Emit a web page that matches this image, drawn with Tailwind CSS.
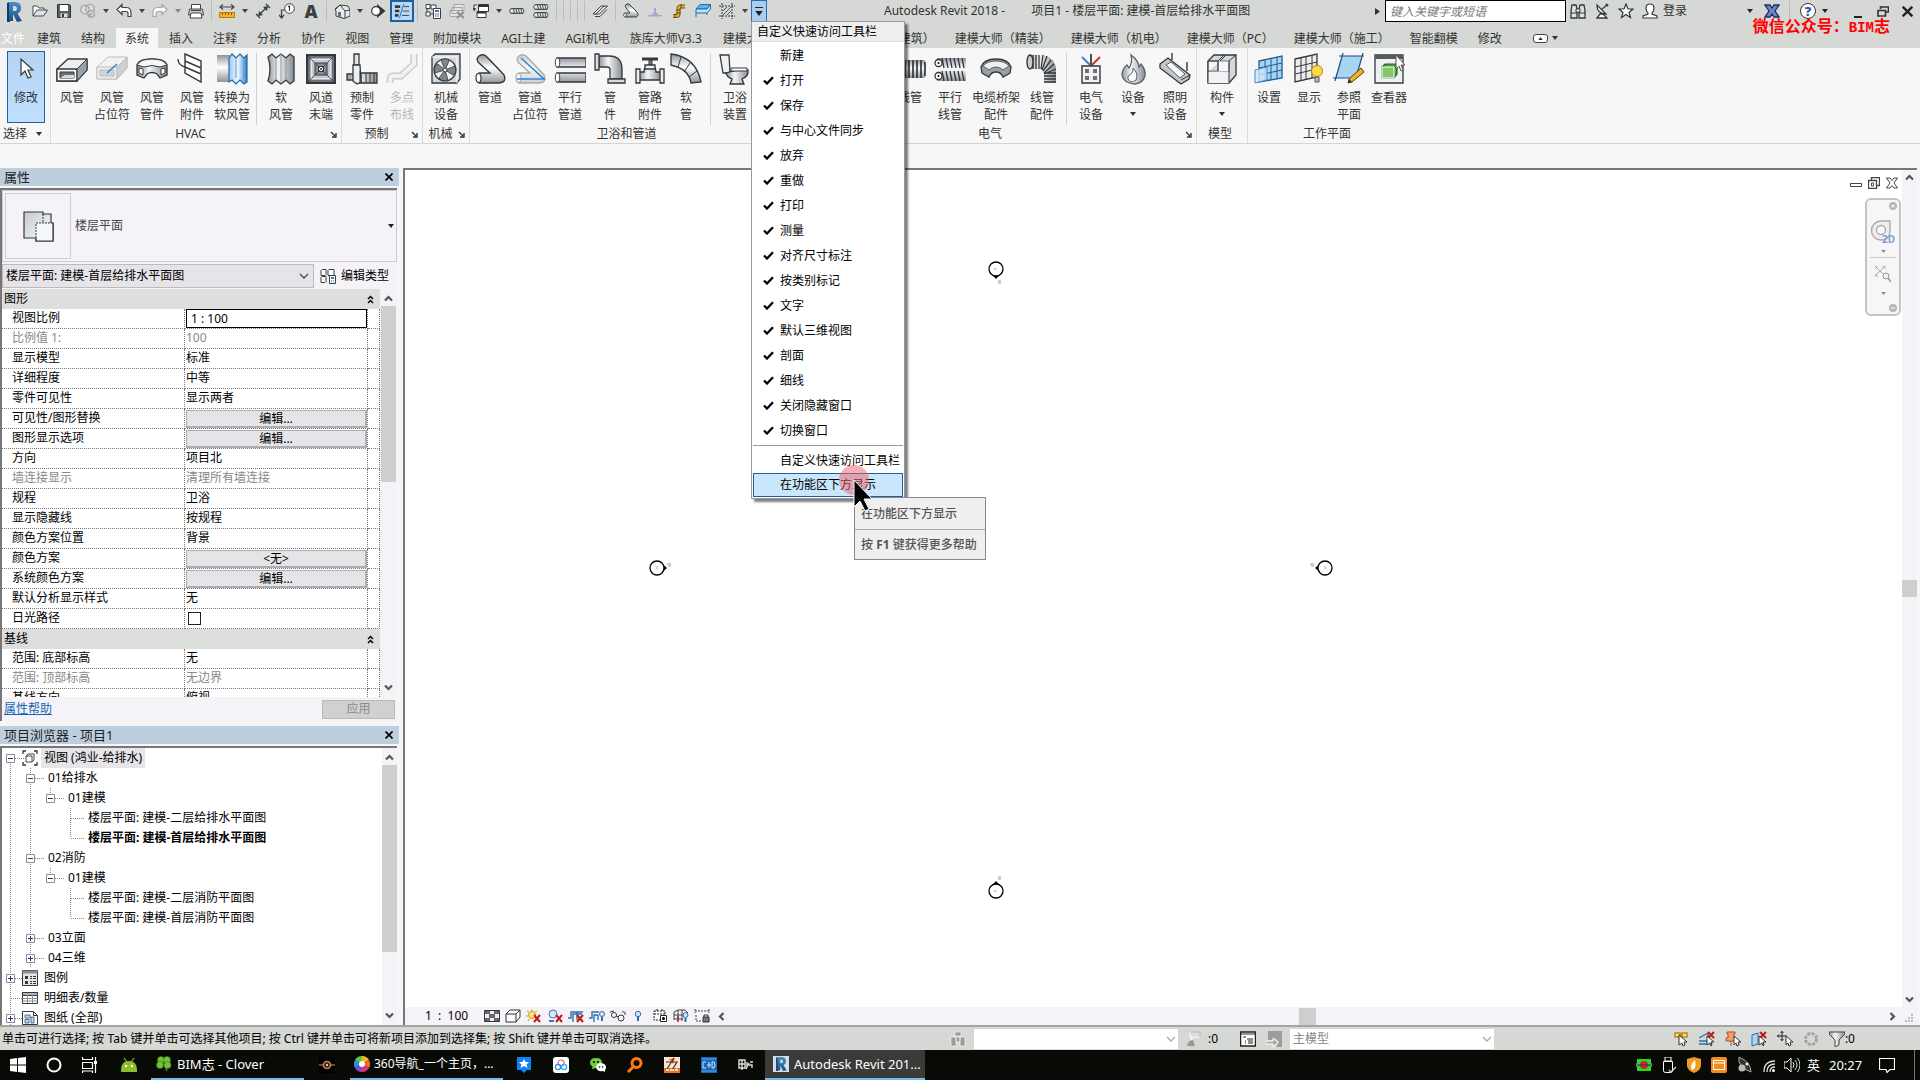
<!DOCTYPE html>
<html lang="zh-CN">
<head>
<meta charset="utf-8">
<meta name="viewport" content="width=device-width, initial-scale=1">
<title>Autodesk Revit 2018 - 项目1</title>
<script src="https://cdn.jsdelivr.net/npm/@tailwindcss/browser@4"></script>
</head>
<body class="relative flex h-screen flex-col overflow-hidden bg-[#f6f6f7] font-['Noto_Sans','Noto_Sans_CJK_SC',sans-serif] text-xs leading-4 text-[#222]">

<!-- Shared icon definitions -->
<svg class="absolute h-0 w-0" aria-hidden="true">
  <defs>
    <linearGradient id="g" x1="0" y1="0" x2="0" y2="1"><stop offset="0" stop-color="#8f959c"/><stop offset=".45" stop-color="#fff"/><stop offset="1" stop-color="#8f959c"/></linearGradient>
    <linearGradient id="gh" x1="0" y1="0" x2="1" y2="0"><stop offset="0" stop-color="#8f959c"/><stop offset=".4" stop-color="#f4f5f6"/><stop offset="1" stop-color="#858b92"/></linearGradient>
    <linearGradient id="gb" x1="0" y1="0" x2="1" y2="0"><stop offset="0" stop-color="#9cc8ee"/><stop offset=".5" stop-color="#eef7ff"/><stop offset="1" stop-color="#2d7cc4"/></linearGradient>
    <linearGradient id="gp" x1="0" y1="0" x2="1" y2="1"><stop offset="0" stop-color="#c4c9d0"/><stop offset="1" stop-color="#fff"/></linearGradient>
    <linearGradient id="gr" x1="0" y1="0" x2="0" y2="1"><stop offset="0" stop-color="#4b90c8"/><stop offset="1" stop-color="#1b4e80"/></linearGradient>
  </defs>

  <!-- generic -->
  <symbol id="tri" viewBox="0 0 6 4"><path d="M0 0h6L3 4z" fill="currentColor"/></symbol>
  <symbol id="launch" viewBox="0 0 7 7"><path d="M1 1l4 4M6 2v4H2" fill="none" stroke="#333" stroke-width="1.4"/></symbol>
  <symbol id="chev" viewBox="0 0 10 6"><path d="M1 1l4 4 4-4" fill="none" stroke="currentColor" stroke-width="1.3"/></symbol>
  <symbol id="arr" viewBox="0 0 9 7"><path d="M1 1.5l3.500 3.500L8 1.500" fill="none" stroke="#555" stroke-width="2.200"/></symbol>
  <symbol id="x" viewBox="0 0 8 8"><path d="M.5.5l7 7M7.500.5l-7 7" stroke="currentColor" stroke-width="1.700"/></symbol>
  <symbol id="ck" viewBox="0 0 11 9"><path d="M1 4.500l3 3L10 1.200" fill="none" stroke="#000" stroke-width="2.300"/></symbol>
  <symbol id="dbl" viewBox="0 0 7 9"><path d="M1 4l2.500-2.500L6 4M1 8l2.500-2.500L6 8" fill="none" stroke="#000" stroke-width="1.500"/></symbol>
  <symbol id="R" viewBox="0 0 16 20"><path d="M1 1l3-1v20H1z" fill="#123a63"/><path d="M3 0h6q6 0 6 6 0 4-3.500 5.500L16 19l-5 1-4-8v7H3z" fill="url(#gr)"/><path d="M7 4v5q4 .5 4-2.500T7 4z" fill="#cfdce8"/></symbol>

  <!-- quick access toolbar -->
  <symbol id="q-open" viewBox="0 0 16 16"><path d="M1 13V3h4l2 2h5v3" fill="#fff" stroke="#444a50"/><path d="M1 13l4-6h10.500l-4 6z" fill="#dfe3e7" stroke="#444a50"/></symbol>
  <symbol id="q-save" viewBox="0 0 16 16"><path d="M1.500 1.500h12l1 1v12h-13z" fill="#5a6066" stroke="#30353a"/><path d="M4 2h8v6H4z" fill="#fff"/><path d="M4.500 10.500h7v4h-7z" fill="#d9dcdf"/><path d="M6 11h2v3H6z" fill="#333"/></symbol>
  <symbol id="q-sync" viewBox="0 0 16 16"><path d="M1 4l4-2 4 2v5l-4 2-4-2zM6 3l4-2 4 2v5l-4 3-4-3z" fill="#ddd" stroke="#999"/><circle cx="11" cy="11" r="4" fill="#aaa"/><path d="M9 11a2 2 0 1 1 2 2" fill="none" stroke="#eee"/></symbol>
  <symbol id="q-undo" viewBox="0 0 16 16"><path d="M1 6.500l5-5v3h4q5 0 5 5v4h-3v-3q0-2-2-2H6v3z" fill="#fff" stroke="currentColor" stroke-width="1.200"/></symbol>
  <symbol id="q-print" viewBox="0 0 16 16"><path d="M3.500 6V1.500h9V6" fill="#fff" stroke="#444"/><path d="M1.500 6h13l1 6H.5z" fill="#c8ccd0" stroke="#444"/><path d="M3 10h10l1 5H2z" fill="#fff" stroke="#444"/><path d="M3 7.500h10" stroke="#444"/></symbol>
  <symbol id="q-meas" viewBox="0 0 16 16"><path d="M1 4h14M4 1.500L1 4l3 2.500M12 1.500L15 4l-3 2.500" fill="none" stroke="#444" stroke-width="1.200"/><path d="M.5 9.500h15v5H.5z" fill="#f5b428" stroke="#b87a10"/><path d="M3.500 10v2M6.500 10v2M9.500 10v2M12.500 10v2" stroke="#8a5a00"/></symbol>
  <symbol id="q-dim" viewBox="0 0 16 16"><path d="M4 12l8-8M1 11l4 4M11 1l4 4" stroke="#3a3f45" stroke-width="1.300"/><path d="M3 13l1-5 4 4zM13 3L8 4l4 4z" fill="#3a3f45"/></symbol>
  <symbol id="q-tag" viewBox="0 0 16 16"><circle cx="10.500" cy="5.500" r="4.800" fill="#fff" stroke="#3a3f45"/><path d="M9 4l1.500-1v5M6 7H2.500v7M0 12l2.500 3L5 12" fill="none" stroke="#3a3f45" stroke-width="1.200"/></symbol>
  <symbol id="q-house" viewBox="0 0 16 16"><path d="M1 6l5-4 8 1 2 4v6l-6 2.500L2 13V8z" fill="#e8ebee" stroke="#3a3f45"/><path d="M1 7l5-5 5 6v7M11 8l5-1" fill="none" stroke="#3a3f45"/><path d="M4 9h3v5l-3-.8z" fill="#6a7078"/></symbol>
  <symbol id="q-sec" viewBox="0 0 16 16"><path d="M7 1l8.500 7L7 15z" fill="#333"/><circle cx="6" cy="8" r="4.300" fill="#fff" stroke="#333" stroke-width="1.200"/></symbol>
  <symbol id="q-thin" viewBox="0 0 18 16"><path d="M1 3h6M1 8h5M1 13h4" stroke="#33383d" stroke-width="3"/><path d="M11 3h6M10 8h7M9 13h8" stroke="#33383d"/><path d="M11 0L6 16" stroke="#2f7fd0" stroke-width="1.200"/></symbol>
  <symbol id="q-prop" viewBox="0 0 16 16"><path d="M1 1.500h4v4H1zM1 9h4v4H1zM6 2h5v4H6zM2 6v3M5 11h3" fill="#fff" stroke="#3a3f45"/><path d="M8.500 5.500h7v10h-7z" fill="#fff" stroke="#3a3f45"/><path d="M10 7h4v2h-4z" fill="#2f7fd0"/><path d="M10 11h1.500m1 0H14M10 13h1.500m1 0H14" stroke="#444"/></symbol>
  <symbol id="q-type" viewBox="0 0 16 16"><path d="M1 2.500l1-1h4v5l-1 1H1zM8 2.500l1-1h5v5l-1 1H8zM1 9.500l1-1h4v5l-1 1H1z" fill="#fff" stroke="#3a3f45"/><path d="M9.500 7.500h6v8h-6z" fill="#fff" stroke="#3a3f45"/><path d="M11 9h3v2h-3z" fill="#2f7fd0"/><path d="M11 13h1m1 0h1" stroke="#444"/></symbol>
  <symbol id="q-close" viewBox="0 0 16 16"><path d="M5 1.500h10v6H5zM3 4.500h10v6H3zM1 7.500h9v6H1z" fill="#e4e5e4" stroke="#a2a5a2"/><path d="M8 9l7 6M15 9l-7 6" stroke="#8f9290" stroke-width="2"/></symbol>
  <symbol id="q-switch" viewBox="0 0 16 16"><path d="M5.500 1.500h10v7h-10zM1 8V2h3" fill="#fff" stroke="#333"/><path d="M6 2h9v2H6z" fill="#333"/><path d="M4 8.500h9v6H4z" fill="#fff" stroke="#333"/><path d="M4 9h9v1.500H4zM0 5h3L1.500 8z" fill="#333"/></symbol>
  <symbol id="q-cond" viewBox="0 0 16 6"><path d="M2 .5h12q2 2.500 0 5H2Q-1 3 2 .5z" fill="url(#g)" stroke="#4a4f55"/><path d="M4.500 1l1 4.500M7 1l1 4.500M9.500 1l1 4.500M12 1l1 4.500" stroke="#4a4f55"/></symbol>
  <symbol id="q-tray" viewBox="0 0 16 16"><path d="M1 11L9 3h6.500l-8 8zM3 13.500h5l7-7" fill="#dfe2e6" stroke="#444"/><path d="M4 11l8-8" stroke="#444"/></symbol>
  <symbol id="q-pipe" viewBox="0 0 16 16"><path d="M3 1.500Q6 0 7 2l7.500 7.500Q16 13 13 14H2q-2-2 0-4h5L2.500 4Q2 2 3 1.500z" fill="url(#g)" stroke="#3a3f45"/><ellipse cx="2" cy="12" rx="1.300" ry="2" fill="#fff" stroke="#3a3f45" stroke-width=".8"/></symbol>
  <symbol id="q-pur" viewBox="0 0 16 16"><path d="M1 12h14v1.500H1zM5 10h6v2H5zM7 3h2v7H7z" fill="#a9a7d0"/><path d="M6 3h4v2H6z" fill="#d4d2e6"/></symbol>
  <symbol id="q-gold" viewBox="0 0 16 16"><path d="M14 3.500H9.500q-2 0-2 2.500v5q0 2-2 2H2" fill="none" stroke="#7a5a10" stroke-width="4"/><path d="M14 3.500H9.500q-2 0-2 2.500v5q0 2-2 2H2" fill="none" stroke="#e2b33c" stroke-width="2"/><path d="M10 1v5M5 7h5M5 10h5M4 11v4" stroke="#6a4d0c"/></symbol>
  <symbol id="q-blue" viewBox="0 0 16 16"><path d="M1 6l4-4.500h10.500L12 6z" fill="#5fb4ec" stroke="#1d6ea8"/><path d="M1 6h11l3.500-4.500V6L12 10H1z" fill="#bfe2f8" stroke="#1d6ea8"/><path d="M1 10v4M12 10v2" stroke="#1d6ea8"/></symbol>
  <symbol id="q-crop" viewBox="0 0 16 16"><path d="M3 0v16M13 0v16M0 3h16M0 13h16" stroke="#33383d" stroke-dasharray="2 1"/><path d="M4 8l4-4M4 12l8-8M8 12l4-4" stroke="#555"/></symbol>
  <symbol id="bino" viewBox="0 0 16 16"><path d="M2 2h4l1 4v9H1V8zM10 2h4l1 6v7H9V6z" fill="#dfe2e4" stroke="#33383d" stroke-width="1.300"/><path d="M6 6h4v3H6zM1 10h6M9 10h6" fill="#fff" stroke="#33383d"/></symbol>
  <symbol id="sat" viewBox="0 0 16 16"><path d="M3 2q0 9 9 9zM8 6l5-4M3 15h10l-4-4H6z" fill="#fff" stroke="#33383d" stroke-width="1.300"/><path d="M12 1l2 2" stroke="#33383d" stroke-width="2"/></symbol>
  <symbol id="star" viewBox="0 0 16 16"><path d="M8 1l2 5h5l-4 3.500 1.500 5L8 11.500l-4.500 3 1.500-5L1 6h5z" fill="#fff" stroke="#33383d" stroke-width="1.200"/></symbol>
  <symbol id="user" viewBox="0 0 16 16"><path d="M8 1q4 0 4 4 0 3-2 5v1l5 2v2H1v-2l5-2v-1Q4 8 4 5q0-4 4-4z" fill="#fff" stroke="#33383d" stroke-width="1.200"/></symbol>
  <symbol id="exch" viewBox="0 0 16 14"><path d="M1 1h5l2 3 2-3h5l-4 6 4 6h-5l-2-3-2 3H1l4-6z" fill="#6f86c4" stroke="#1c2d66" stroke-width="1.300"/></symbol>
  <symbol id="wres" viewBox="0 0 12 11"><path d="M3.500 3V1h8v5H9M1 4.500h7.500v5.500H1z" fill="none" stroke="#333" stroke-width="1.600"/></symbol>

  <!-- ribbon -->
  <symbol id="r-cur" viewBox="0 0 32 32"><path d="M11 6v16l4-4 3 7 3-1-3-7h5z" fill="#fff" stroke="#33383d" stroke-width="1.200"/></symbol>
  <symbol id="r-duct" viewBox="0 0 32 32"><path d="M1 16L12 6h19v11L21 28H1z" fill="#eceef0" stroke="#33383d" stroke-width="1.300"/><path d="M1 16h20v12H1z" fill="#f8f8f8" stroke="#33383d" stroke-width="1.300"/><path d="M21 16L31 6v11L21 28z" fill="#9aa0a8" stroke="#33383d"/><path d="M4 19h14v6H4z" fill="#6b7178" stroke="#33383d"/><path d="M4 25l5-3h9v3z" fill="#d5d8dc"/></symbol>
  <symbol id="r-ductp" viewBox="0 0 32 32"><g opacity=".45"><path d="M1 14L12 4h19v11L21 26H1z" fill="#eceef0" stroke="#777"/><path d="M1 14h20v12H1z" fill="#e4e4e4" stroke="#777"/><path d="M21 14L31 4v11L21 26z" fill="#9aa0a8" stroke="#777"/><path d="M4 17h14v6H4z" fill="#aaa" stroke="#777"/></g><path d="M11 20L21 11" stroke="#2f86d8" stroke-width="1.600"/></symbol>
  <symbol id="r-elbow" viewBox="0 0 32 32"><path d="M1 12Q3 6 16 6t15 6v10l-7 3-3-4q-5-3-10 0l-3 4-7-3z" fill="url(#gh)" stroke="#33383d" stroke-width="1.300"/><path d="M1 12l7 2q8-3 16 0l7-2Q28 6 16 6T1 12z" fill="#f7f7f8" stroke="#33383d"/><path d="M3 15l4 1v6l-4-2zM29 15l-4 1v6l4-2z" fill="#fff" stroke="#33383d"/></symbol>
  <symbol id="r-vane" viewBox="0 0 32 32"><path d="M9 1l16 7v21L9 20zM9 8l16 7M9 14l16 7M2 6q0 6 7 8" fill="#fff" stroke="#33383d" stroke-width="1.400"/></symbol>
  <symbol id="r-conv" viewBox="0 0 32 32"><path d="M1 2h13v27H1z" fill="url(#g)"/><path d="M13 5l3-4 4 4 4-4 4 4 3-3v27l-3 2-4-4-4 4-4-4-3 2z" fill="url(#gb)" stroke="#2169a8" stroke-width="1.200"/><path d="M20 5v20M28 5v20" stroke="#5d9fd6"/></symbol>
  <symbol id="r-flex" viewBox="0 0 32 32"><path d="M3 4l4-3 4 4 5-4 5 4 4-4 4 3v24l-4 3-4-4-5 4-5-4-4 4-4-3q4-12 0-24z" fill="url(#gh)" stroke="#33383d" stroke-width="1.300"/><path d="M11 5v22M21 5v22M16 1v29" stroke="#9299a1"/></symbol>
  <symbol id="r-diff" viewBox="0 0 32 32"><path d="M2 2h28v28H2z" fill="#6b7178" stroke="#33383d" stroke-width="2"/><path d="M6 6h20v20H6z" fill="#c6cacf" stroke="#fff"/><path d="M10 10h12v12H10z" fill="#878d94" stroke="#33383d"/><path d="M13.500 13.500h5v5h-5z" fill="#fff" stroke="#33383d"/><path d="M2 2l28 28M30 2L2 30" stroke="#33383d" stroke-width=".8"/></symbol>
  <symbol id="r-fab" viewBox="0 0 32 32"><path d="M8 1h5v11H8zM1 21h7v6H1zM15 20h16v10H15z" fill="url(#gh)" stroke="#33383d" stroke-width="1.300"/><path d="M7 12h7l1 17-4 2-4-3z" fill="#eee" stroke="#33383d" stroke-width="1.300"/><path d="M20 20v10M24 20v10M28 20v10M14 18v13" stroke="#33383d"/></symbol>
  <symbol id="r-multi" viewBox="0 0 32 32"><g opacity=".55"><path d="M28 1v10L15 23H6q-2 0-2 7" fill="none" stroke="#aaa" stroke-width="7"/><path d="M28 1v10L15 23H6q-2 0-2 7" fill="none" stroke="#eee" stroke-width="4"/></g></symbol>
  <symbol id="r-fan" viewBox="0 0 32 32"><path d="M2 4l3-3h25v25l-3 4H2z" fill="#d5d8dc" stroke="#33383d" stroke-width="1.300"/><path d="M2 4h25v26" fill="none" stroke="#fff"/><circle cx="15" cy="17" r="11" fill="#f4f4f4" stroke="#33383d" stroke-width="1.200"/><path d="M15 17L11 7q6-3 8 1zM15 17l10-4q2 7-2 9zM15 17l3 10q-6 2-9-2zM15 17L5 20q-2-7 3-9z" fill="#7f868d" stroke="#33383d" stroke-width=".8"/><circle cx="15" cy="17" r="2" fill="#fff" stroke="#33383d"/></symbol>
  <symbol id="r-pipe" viewBox="0 0 32 32"><path d="M5 3q5-3 8 1l17 18q2 5-1 7l-4 1H5q-4-5 0-10h11L4 9q-2-4 1-6z" fill="url(#g)" stroke="#33383d" stroke-width="1.400"/><ellipse cx="4.500" cy="25" rx="2.500" ry="4.500" fill="#fff" stroke="#33383d" stroke-width="1.200"/></symbol>
  <symbol id="r-pipep" viewBox="0 0 32 32"><g opacity=".4"><use href="#r-pipe"/></g><path d="M7 5l23 21H3" fill="none" stroke="#2f86d8" stroke-width="1.600"/></symbol>
  <symbol id="r-par" viewBox="0 0 32 32"><path d="M3 5h29v9H3zM3 20h29v9H3z" fill="url(#g)" stroke="#33383d" stroke-width="1.300"/><ellipse cx="3.500" cy="9.500" rx="2.200" ry="4.500" fill="#fff" stroke="#33383d"/><ellipse cx="3.500" cy="24.500" rx="2.200" ry="4.500" fill="#fff" stroke="#33383d"/></symbol>
  <symbol id="r-fit" viewBox="0 0 32 32"><path d="M5 3h10q13 0 13 13v10H16V17q0-3-3-3H5z" fill="url(#gh)" stroke="#33383d" stroke-width="1.300"/><path d="M1 1h4v16H1zM14 26h17v4H14z" fill="#d9dcdf" stroke="#33383d" stroke-width="1.300"/></symbol>
  <symbol id="r-valve" viewBox="0 0 32 32"><path d="M8 6h16" stroke="#33383d" stroke-width="3"/><path d="M15 7h3v6h-3z" fill="#777" stroke="#33383d"/><path d="M5 19h5q0-6 6-7 6 1 6 7h5v8H5z" fill="url(#gh)" stroke="#33383d" stroke-width="1.300"/><path d="M2 16h4v14H2zM26 16h4v14h-4zM11 12h10v4H11z" fill="#eee" stroke="#33383d" stroke-width="1.300"/></symbol>
  <symbol id="r-hose" viewBox="0 0 32 32"><path d="M1 1q25 3 30 28l-10 1Q19 16 1 12z" fill="url(#g)" stroke="#33383d" stroke-width="1.300"/><path d="M11 4L8 14M20 10l-6 9M27 18l-8 6" stroke="#33383d"/></symbol>
  <symbol id="r-wc" viewBox="0 0 32 32"><path d="M1 2h9l1 18H4z" fill="#eef0f2" stroke="#33383d" stroke-width="1.300"/><path d="M7 20q12-4 22-3 1 6-6 9l2 5H11l2-5q-5-2-6-6z" fill="url(#gh)" stroke="#33383d" stroke-width="1.300"/><path d="M12 15h16v3H12z" fill="#fff" stroke="#33383d"/></symbol>
  <symbol id="r-cond" viewBox="0 0 32 32"><path d="M1 7h30v18H1z" fill="url(#g)"/><path d="M3 7v18M7 7v18M11 7v18M15 7v18M19 7v18M23 7v18M27 7v18M31 9v14" stroke="#33383d" stroke-width="1.700"/></symbol>
  <symbol id="r-pcond" viewBox="0 0 32 32"><path d="M3 5h29v10H3zM3 18h29v10H3z" fill="url(#g)"/><path d="M8 5l2 10M12 5l2 10M16 5l2 10M20 5l2 10M24 5l2 10M28 5l2 10M8 18l2 10M12 18l2 10M16 18l2 10M20 18l2 10M24 18l2 10M28 18l2 10" stroke="#33383d" stroke-width="1.300"/><circle cx="4.500" cy="10" r="3.500" fill="#fff" stroke="#33383d" stroke-width="1.300"/><circle cx="4.500" cy="23" r="3.500" fill="#fff" stroke="#33383d" stroke-width="1.300"/><circle cx="4.500" cy="10" r="1" /><circle cx="4.500" cy="23" r="1"/></symbol>
  <symbol id="r-tray" viewBox="0 0 32 32"><path d="M1 14Q4 6 16 6t15 8l-1 6-7 4q-2-5-7-5t-7 5l-7-4z" fill="#9aa0a8" stroke="#33383d" stroke-width="1.300"/><path d="M3 13q4-5 13-5t13 5l-6 4q-3-3-7-3t-7 3z" fill="#eceef0" stroke="#5a6066"/></symbol>
  <symbol id="r-cfit" viewBox="0 0 32 32"><path d="M2 2h14q14 2 14 16v12H18V20q0-4-5-4H2z" fill="url(#gh)"/><path d="M7 2v14M10 2v14M13 2v14M17 2l-2 14M21 3l-5 14M25 7l-8 11M28 11l-10 9M30 16l-12 5M30 20H18M30 23H18M30 26H18M30 29H18" stroke="#33383d" stroke-width="1.300"/><ellipse cx="4" cy="9" rx="3" ry="7" fill="#ccc" stroke="#33383d" stroke-width="1.400"/></symbol>
  <symbol id="r-elec" viewBox="0 0 32 32"><path d="M16 1v12" stroke="#222" stroke-width="1.600"/><path d="M7 4l8 8" stroke="#2f7fd0" stroke-width="1.800"/><path d="M25 4l-8 8" stroke="#d02828" stroke-width="1.800"/><path d="M7 13h18v17H7z" fill="#f1f1f1" stroke="#33383d" stroke-width="1.400"/><path d="M10 16h4v4h-4zM18 16h4v4h-4zM10 23h4v4h-4zM18 23h4v4h-4z" fill="#6b7178"/></symbol>
  <symbol id="r-fire" viewBox="0 0 32 32"><path d="M14 2q8 6 8 12l2-3q5 6 4 12-2 7-10 8Q6 30 5 22q0-6 5-10l2 3q4-6 2-13z" fill="url(#gh)" stroke="#5a6066" stroke-width="1.300"/><path d="M16 15q6 6 3 12-5 4-8-1-1-3 2-4 4-3 3-7z" fill="#fafafa" stroke="#5a6066"/></symbol>
  <symbol id="r-light" viewBox="0 0 32 32"><path d="M13 0v7M28 9v9" stroke="#33383d" stroke-width="1.400"/><path d="M1 11l8-6 22 17-1 4-8 5L1 15z" fill="#c3c7cb" stroke="#33383d" stroke-width="1.300"/><path d="M7 12l5-3 14 12-5 4z" fill="#fafafa" stroke="#5a6066"/><path d="M22 27l9-5" stroke="#33383d"/></symbol>
  <symbol id="r-comp" viewBox="0 0 32 32"><path d="M2 8l6-6h22v20l-7 8H2z" fill="#d4d7db" stroke="#33383d" stroke-width="1.300"/><path d="M2 8h10v10H2zM2 19h21V8h-9" fill="#f6f6f7" stroke="#777d84"/><path d="M2 19h21v11H2z" fill="#f2f2f4"/><path d="M12 8l6-6M14 8l6-6M23 8l7-6M23 8v22" stroke="#33383d" fill="none"/><path d="M2 30V8h10v10" fill="none" stroke="#33383d"/></symbol>
  <symbol id="r-set" viewBox="0 0 32 32"><path d="M6 8l23-5v22L6 29z" fill="#a7d4f2" stroke="#1d5f96" stroke-width="1.300"/><path d="M12 7v21M18 5v22M24 4v22M6 15l23-5M6 22l23-5" stroke="#1d5f96"/><path d="M2 17l12-3v13L2 30z" fill="#cfe6f7" fill-opacity=".8" stroke="#4a8abd"/></symbol>
  <symbol id="r-show" viewBox="0 0 32 32"><path d="M2 6l22-5v23L2 29z" fill="#eceef0" stroke="#33383d" stroke-width="1.300"/><path d="M8 5v22M13 4v22M19 2v23M2 14l22-5M2 21l22-5" stroke="#33383d"/><circle cx="24" cy="18" r="5.500" fill="#ffd84c" stroke="#b8860b"/><path d="M22 24h4v5h-4z" fill="#bbb" stroke="#555"/></symbol>
  <symbol id="r-ref" viewBox="0 0 32 32"><path d="M9 3h20l-6 22H2z" fill="#a9d5f3"/><path d="M10 0L2 28M30 0l-7 25M6 3h25M0 25h24" stroke="#1d4f86" stroke-width="1.200"/><path d="M16 26L28 15l3 4-12 10-4 1z" fill="#f0b030" stroke="#5a3a10"/><path d="M16 26l3 3-4 1z" fill="#333"/></symbol>
  <symbol id="r-view" viewBox="0 0 32 32"><path d="M2 2h28v28H2z" fill="#eef0f2" stroke="#33383d" stroke-width="1.300"/><path d="M2 2h28v4H2z" fill="#555b61"/><path d="M9 14l3-3h12v10l-3 4H9z" fill="#4c9a3a" stroke="#256018" stroke-width="1.200"/><path d="M9 14h12v11H9z" fill="#86c56a" stroke="#fff"/><path d="M23 2v14l3-3 2 5 2-1-2-5h4z" fill="#fff" stroke="#555"/></symbol>

  <!-- property and browser -->
  <symbol id="p-plan" viewBox="0 0 32 32"><path d="M2 2h19v2h8v9h2v18H14v-3H2z" fill="url(#gp)" stroke="#33383d" stroke-width="1.200"/><path d="M14 13h17v18H14z" fill="#f7f8fb"/><path d="M14 28v3h17V13" fill="none" stroke="#33383d" stroke-width="1.200"/><path d="M21 4v9M14 28V13h17" fill="none" stroke="#33383d" stroke-dasharray="2 1"/></symbol>
  <symbol id="t-v" viewBox="0 0 20 20"><path d="M10.500 0v20" stroke="#888" stroke-dasharray="1 1"/></symbol>
  <symbol id="t-leaf" viewBox="0 0 28 20"><path d="M10.500 0v20M11 10.500h14" stroke="#888" stroke-dasharray="1 1"/></symbol>
  <symbol id="t-end" viewBox="0 0 28 20"><path d="M10.500 0v10M11 10.500h14" stroke="#888" stroke-dasharray="1 1"/></symbol>
  <symbol id="t-minus" viewBox="0 0 28 20"><path d="M10.500 0v20M11 10.500h14" stroke="#888" stroke-dasharray="1 1"/><path d="M6.500 6.500h8v8h-8z" fill="#fff" stroke="#8a8f96"/><path d="M8 10.500h5" stroke="#1f3a7a"/></symbol>
  <symbol id="t-minusend" viewBox="0 0 28 20"><path d="M10.500 0v10M11 10.500h14" stroke="#888" stroke-dasharray="1 1"/><path d="M6.500 6.500h8v8h-8z" fill="#fff" stroke="#8a8f96"/><path d="M8 10.500h5" stroke="#1f3a7a"/></symbol>
  <symbol id="t-root" viewBox="0 0 28 20"><path d="M10.500 10v10M11 10.500h14" stroke="#888" stroke-dasharray="1 1"/><path d="M6.500 6.500h8v8h-8z" fill="#fff" stroke="#8a8f96"/><path d="M8 10.500h5" stroke="#1f3a7a"/></symbol>
  <symbol id="t-plus" viewBox="0 0 28 20"><path d="M10.500 0v20M11 10.500h14" stroke="#888" stroke-dasharray="1 1"/><path d="M6.500 6.500h8v8h-8z" fill="#fff" stroke="#8a8f96"/><path d="M8 10.500h5M10.500 8v5" stroke="#1f3a7a"/></symbol>
  <symbol id="t-view" viewBox="0 0 16 16"><path d="M1 4V1h3M12 1h3v3M15 12v3h-3M4 15H1v-3" fill="none" stroke="#333" stroke-width="1.300"/><path d="M4 6l2-2h6v6l-2 2H4zM4 6h6v6" fill="#fff" stroke="#444"/></symbol>
  <symbol id="t-leg" viewBox="0 0 16 16"><path d="M.5.5h15v15H.5z" fill="#e4e7ea" stroke="#33383d"/><path d="M.5.5h15v3H.5z" fill="#8a9096"/><path d="M3 6h3v3H3zM3 11h3v3H3z" fill="#33383d"/><path d="M8 6.500h2m1 0h3M8 8.500h2m1 0h3M8 11.500h2m1 0h3M8 13.500h2m1 0h3" stroke="#33383d"/></symbol>
  <symbol id="t-sch" viewBox="0 0 16 16"><path d="M.5 2.500h15v11H.5z" fill="#fff" stroke="#33383d"/><path d="M.5 2.500h15v3H.5z" fill="#aeb3b8" stroke="#33383d"/><path d="M.5 8.500h15M.5 11h15M5.500 5v8M10.500 5v8" stroke="#8a8f94"/></symbol>
  <symbol id="t-sheet" viewBox="0 0 16 16"><path d="M.5 1.500h11l4 4v9H.5z" fill="#fff" stroke="#33383d"/><path d="M3 5h5v3H3zM3 9.500h4V13H3zM9 7h3v6H9z" fill="#c5dbee" stroke="#4a6f92"/><path d="M11.500 1.500v4h4" fill="none" stroke="#33383d"/></symbol>
</svg>

<!-- Title bar -->
<header class="flex h-6 shrink-0 items-start bg-[#d5d8d4]">
  <div class="flex w-7 justify-center pt-0.5"><svg class="h-5 w-4"><use href="#R"/></svg></div>
  <nav aria-label="快速访问工具栏" class="flex h-[22px] items-center text-[#444] [&>button]:grid [&>button]:h-[22px] [&>button]:w-6 [&>button]:place-items-center [&>button>svg]:size-4 [&>i]:mx-[3px] [&>i]:h-5 [&>i]:w-px [&>i]:bg-[#b9bcb9] [&>svg]:mx-[3px] [&>svg]:h-[4px] [&>svg]:w-[6px]">
    <button aria-label="打开"><svg><use href="#q-open"/></svg></button>
    <button aria-label="保存"><svg><use href="#q-save"/></svg></button>
    <button aria-label="与中心文件同步"><svg><use href="#q-sync"/></svg></button>
    <svg><use href="#tri"/></svg>
    <button aria-label="放弃"><svg><use href="#q-undo"/></svg></button>
    <svg><use href="#tri"/></svg>
    <button aria-label="重做" class="-scale-x-100 text-[#a5a8a5]"><svg><use href="#q-undo"/></svg></button>
    <svg class="text-[#888]"><use href="#tri"/></svg>
    <button aria-label="打印"><svg><use href="#q-print"/></svg></button>
    <i></i>
    <button aria-label="测量"><svg><use href="#q-meas"/></svg></button>
    <svg><use href="#tri"/></svg>
    <button aria-label="对齐尺寸标注"><svg><use href="#q-dim"/></svg></button>
    <button aria-label="按类别标记"><svg><use href="#q-tag"/></svg></button>
    <button aria-label="文字" class="text-lg font-black leading-5 text-[#3a3f45]">A</button>
    <i></i>
    <button aria-label="默认三维视图"><svg><use href="#q-house"/></svg></button>
    <svg><use href="#tri"/></svg>
    <button aria-label="剖面"><svg><use href="#q-sec"/></svg></button>
    <button aria-label="细线" class="border-2 border-[#1f5f9f] bg-[#b9d8f5]"><svg><use href="#q-thin"/></svg></button>
    <i></i>
    <button aria-label="属性"><svg><use href="#q-prop"/></svg></button>
    <button aria-label="关闭隐藏窗口"><svg><use href="#q-close"/></svg></button>
    <button aria-label="切换窗口"><svg><use href="#q-switch"/></svg></button>
    <svg><use href="#tri"/></svg>
    <button aria-label="线管"><svg><use href="#q-cond"/></svg></button>
    <button aria-label="平行线管"><svg viewBox="0 0 16 16"><use href="#q-cond" y="1" width="16" height="6"/><use href="#q-cond" y="9" width="16" height="6"/></svg></button>
    <i></i><i></i><i></i><i></i><i></i>
    <button aria-label="桥架"><svg><use href="#q-tray"/></svg></button>
    <i></i>
    <button aria-label="管道"><svg><use href="#q-pipe"/></svg></button>
    <button aria-label="喷头"><svg><use href="#q-pur"/></svg></button>
    <button aria-label="管件"><svg><use href="#q-gold"/></svg></button>
    <button aria-label="楼板"><svg><use href="#q-blue"/></svg></button>
    <button aria-label="裁剪"><svg><use href="#q-crop"/></svg></button>
    <svg><use href="#tri"/></svg>
  </nav>
  <button aria-label="自定义快速访问工具栏" class="grid h-[22px] w-4 place-content-center gap-[3px] border border-[#2a6cae] bg-[#a9cdf0] text-[#222]"><span class="block h-px w-2 bg-[#222]"></span><svg class="h-[5px] w-2"><use href="#tri"/></svg></button>
  <h1 class="flex h-[22px] items-center gap-[26px] whitespace-pre pl-[117px] text-[#333]"><span>Autodesk Revit 2018 -</span><span>项目1 - 楼层平面: 建模-首层给排水平面图</span></h1>
  <div class="ml-auto flex h-[22px] items-center">
    <svg class="mr-[5px] h-[7px] w-[5px]" viewBox="0 0 5 7"><path d="M0 0l5 3.500L0 7z" fill="#333"/></svg>
    <input aria-label="搜索" placeholder="键入关键字或短语" class="h-[22px] w-[181px] border border-black bg-white pl-1 text-xs italic placeholder:text-[#777]">
    <div class="flex items-center gap-2 pl-1 [&_svg]:size-4">
      <button aria-label="查找"><svg><use href="#bino"/></svg></button>
      <button aria-label="通讯中心"><svg><use href="#sat"/></svg></button>
      <button aria-label="收藏夹"><svg><use href="#star"/></svg></button>
      <button class="flex items-center gap-[5px] text-[#333]"><svg><use href="#user"/></svg>登录</button>
    </div>
    <svg class="ml-[60px] h-1 w-1.5"><use href="#tri"/></svg>
    <button aria-label="应用商店" class="ml-[11px]"><svg class="h-[14px] w-4"><use href="#exch"/></svg></button>
    <span class="ml-[9px] mr-2.5 h-5 w-px bg-[#b9bcb9]"></span>
    <button aria-label="帮助" class="grid size-4 place-items-center rounded-full border border-[#333] bg-white text-[13px] font-black leading-3 text-[#2b57b0]">?</button>
    <svg class="ml-[6px] h-1 w-1.5"><use href="#tri"/></svg>
    <button aria-label="最小化" class="ml-[26px] mt-3 h-[2px] w-2 bg-[#222]"></button>
    <button aria-label="还原" class="ml-[15px]"><svg class="h-[11px] w-3"><use href="#wres"/></svg></button>
    <button aria-label="关闭" class="ml-[13px] mr-[7px] text-[#222]"><svg class="size-[11px]"><use href="#x"/></svg></button>
  </div>
</header>
<p class="absolute right-[30px] top-5 font-['Liberation_Mono','Noto_Sans_CJK_SC',monospace] text-base font-bold leading-4 text-[#f00]">微信公众号：<span class="text-sm leading-4">BIM</span>志</p>

<!-- Ribbon tabs -->
<nav aria-label="功能区" class="flex h-6 shrink-0 items-end gap-0.5 whitespace-nowrap bg-[#d5d8d4] text-[#333] [&>a]:h-5 [&>a]:px-[9px] [&>a]:leading-[22px]">
  <span class="h-5 px-px leading-[22px] text-white">文件</span>
  <a href="#">建筑</a><a href="#">结构</a><a href="#" class="bg-[#f7f7f7]">系统</a><a href="#">插入</a><a href="#">注释</a><a href="#">分析</a><a href="#">协作</a><a href="#">视图</a><a href="#">管理</a><a href="#">附加模块</a><a href="#">AGI土建</a><a href="#">AGI机电</a><a href="#" class="mr-px">族库大师V3.3</a>
  <a href="#">建模大师（通用）</a><a href="#">建模大师（建筑）</a><a href="#">建模大师（精装）</a><a href="#">建模大师（机电）</a><a href="#">建模大师（PC）</a><a href="#">建模大师（施工）</a><a href="#">智能翻模</a><a href="#">修改</a>
  <button aria-label="最小化功能区" class="ml-5 flex h-5 items-center gap-1"><span class="grid h-[9px] w-[15px] place-items-center rounded-[3px] border border-[#444] bg-white"><svg class="h-[3px] w-[5px] rotate-180"><use href="#tri"/></svg></span><svg class="h-1 w-[6px]"><use href="#tri"/></svg></button>
</nav>

<!-- Ribbon panels -->
<section class="flex h-24 shrink-0 border-b border-[#d3d5d3] bg-[#f7f7f7] text-center text-[#333] [&>div]:flex [&>div]:flex-col [&>div]:border-r [&>div]:border-[#dadcda] [&>div:last-child]:border-r-0 [&_button]:flex [&_button]:w-10 [&_button]:shrink-0 [&_button]:flex-col [&_button]:items-center [&_button]:whitespace-nowrap [&_button]:leading-[17px] [&_button>svg]:mb-1 [&_button>svg]:size-8 [&_footer]:flex [&_footer]:h-[18px] [&_footer]:items-center [&_footer]:pr-1 [&_footer>span]:flex-1 [&_footer>svg]:mt-px [&_footer>svg]:size-[7px] [&_i]:mx-1 [&_i]:h-[72px] [&_i]:w-px [&_i]:bg-[#d0d2d0] [&_main]:flex [&_main]:h-[77px] [&_main]:pt-[5px] [&_small]:h-1 [&_small]:pt-1.5">
  <div class="w-[51px]">
    <main class="pl-[7px]"><button class="-mt-[2px] h-[72px] w-[38px]! border border-[#1f5f9f] bg-linear-to-b from-[#b5d3f2] to-[#bfe0ff]"><svg class="mt-px"><use href="#r-cur"/></svg>修改</button></main>
    <footer><span class="flex items-center justify-center gap-2">选择<svg class="h-1 w-2"><use href="#tri"/></svg></span></footer>
  </div>
  <div>
    <main class="pl-px">
      <button><svg><use href="#r-duct"/></svg>风管</button>
      <button><svg><use href="#r-ductp"/></svg>风管<br>占位符</button>
      <button><svg><use href="#r-elbow"/></svg>风管<br>管件</button>
      <button><svg><use href="#r-vane"/></svg>风管<br>附件</button>
      <button><svg><use href="#r-conv"/></svg>转换为<br>软风管</button>
      <i></i>
      <button><svg><use href="#r-flex"/></svg>软<br>风管</button>
      <button><svg><use href="#r-diff"/></svg>风道<br>末端</button>
    </main>
    <footer><span>HVAC</span><svg><use href="#launch"/></svg></footer>
  </div>
  <div>
    <main><button><svg><use href="#r-fab"/></svg>预制<br>零件</button><button class="text-[#b4b6b4]"><svg><use href="#r-multi"/></svg>多点<br>布线</button></main>
    <footer><span>预制</span><svg><use href="#launch"/></svg></footer>
  </div>
  <div>
    <main class="px-[3px]"><button><svg><use href="#r-fan"/></svg>机械<br>设备</button></main>
    <footer><span>机械</span><svg><use href="#launch"/></svg></footer>
  </div>
  <div class="w-[325px]">
    <main>
      <button><svg><use href="#r-pipe"/></svg>管道</button>
      <button><svg><use href="#r-pipep"/></svg>管道<br>占位符</button>
      <button><svg><use href="#r-par"/></svg>平行<br>管道</button>
      <button><svg><use href="#r-fit"/></svg>管<br>件</button>
      <button><svg><use href="#r-valve"/></svg>管路<br>附件</button>
      <button class="-ml-1"><svg><use href="#r-hose"/></svg>软<br>管</button>
      <i></i>
      <button><svg><use href="#r-wc"/></svg>卫浴<br>装置</button>
    </main>
    <footer><span>卫浴和管道</span><svg><use href="#launch"/></svg></footer>
  </div>
  <div class="w-[402px]">
    <main class="justify-end">
      <button><svg><use href="#r-cond"/></svg>线管</button>
      <button><svg><use href="#r-pcond"/></svg>平行<br>线管</button>
      <button class="mx-1.5"><svg><use href="#r-tray"/></svg>电缆桥架<br>配件</button>
      <button><svg><use href="#r-cfit"/></svg>线管<br>配件</button>
      <i></i>
      <button class="mr-0.5"><svg><use href="#r-elec"/></svg>电气<br>设备</button>
      <button class="mr-0.5"><svg><use href="#r-fire"/></svg>设备<small><svg class="h-1 w-1.5"><use href="#tri"/></svg></small></button>
      <button class="mr-px"><svg><use href="#r-light"/></svg>照明<br>设备</button>
    </main>
    <footer><span>电气</span><svg><use href="#launch"/></svg></footer>
  </div>
  <div>
    <main class="px-[5px]"><button><svg><use href="#r-comp"/></svg>构件<small><svg class="h-1 w-1.5"><use href="#tri"/></svg></small></button></main>
    <footer><span>模型</span></footer>
  </div>
  <div>
    <main class="px-px"><button><svg><use href="#r-set"/></svg>设置</button><button><svg><use href="#r-show"/></svg>显示</button><button><svg><use href="#r-ref"/></svg>参照<br>平面</button><button><svg><use href="#r-view"/></svg>查看器</button></main>
    <footer><span>工作平面</span></footer>
  </div>
</section>

<!-- Workspace -->
<div class="flex min-h-0 flex-1 pt-6">
  <aside class="flex w-[399px] shrink-0 flex-col">
    <!-- Properties -->
    <section class="flex flex-col">
      <h2 class="flex h-[18px] items-center justify-between bg-[#bdcfde] pl-1 pr-1.5 text-[13px]">属性<button aria-label="关闭属性" class="text-black"><svg class="size-2"><use href="#x"/></svg></button></h2>
      <div class="mr-[2px] mt-0.5 border-l-2 border-t-2 border-[#777] bg-[#f5f3f7]">
        <div class="flex h-[72px] items-center border border-[#ccc9cf] pl-[2px] pr-px">
          <div class="grid size-[66px] place-items-center border border-[#cfccd3]"><svg class="size-8"><use href="#p-plan"/></svg></div>
          <span class="ml-1 text-[#444]">楼层平面</span>
          <svg class="ml-auto h-1 w-2"><use href="#tri"/></svg>
        </div>
        <div class="flex h-[27px] items-center">
          <button class="flex h-6 w-[312px] items-center justify-between border border-[#bbb] bg-[#e6e4e8] pl-[3px] pr-1 text-black">楼层平面: 建模-首层给排水平面图<svg class="h-1.5 w-2.5 text-[#444]"><use href="#chev"/></svg></button>
          <button class="ml-1.5 flex items-center gap-[5px] text-black"><svg class="size-4"><use href="#q-type"/></svg>编辑类型</button>
        </div>
        <div class="flex h-[408px] overflow-hidden">
          <table class="w-[378px] table-fixed border-separate border-spacing-0 self-start bg-white text-black [&_button]:block [&_button]:h-[18px] [&_button]:w-full [&_button]:border [&_button]:border-b-2 [&_button]:border-r-2 [&_button]:border-[#adafad] [&_button]:bg-[#e6e4e8] [&_button]:leading-[15px] [&_td]:h-5 [&_td]:border-b [&_td]:border-r [&_td]:border-dotted [&_td]:border-[#777] [&_td]:p-0 [&_td]:pb-0.5 [&_td]:pl-px [&_td]:leading-[17px] [&_td:first-child]:pl-2.5 [&_th]:h-5 [&_th]:bg-[#dcdfdc] [&_th]:p-0 [&_th]:pl-0.5 [&_th]:text-left [&_th]:font-normal">
            <colgroup><col class="w-[183px]"><col class="w-[183px]"><col class="w-3"></colgroup>
            <tr><th colspan="3"><span class="flex items-center justify-between pr-1.5">图形<svg class="h-[9px] w-[7px]"><use href="#dbl"/></svg></span></th></tr>
            <tr><td><label for="scale">视图比例</label></td><td class="pb-0!"><input id="scale" value="1 : 100" class="block h-[19px] w-full border border-black pl-1"></td><td></td></tr>
            <tr class="text-[#888]"><td>比例值 1:</td><td>100</td><td></td></tr>
            <tr><td>显示模型</td><td>标准</td><td></td></tr>
            <tr><td>详细程度</td><td>中等</td><td></td></tr>
            <tr><td>零件可见性</td><td>显示两者</td><td></td></tr>
            <tr><td>可见性/图形替换</td><td class="pb-0!"><button>编辑...</button></td><td></td></tr>
            <tr><td>图形显示选项</td><td class="pb-0!"><button>编辑...</button></td><td></td></tr>
            <tr><td>方向</td><td>项目北</td><td></td></tr>
            <tr class="text-[#888]"><td>墙连接显示</td><td>清理所有墙连接</td><td></td></tr>
            <tr><td>规程</td><td>卫浴</td><td></td></tr>
            <tr><td>显示隐藏线</td><td>按规程</td><td></td></tr>
            <tr><td>颜色方案位置</td><td>背景</td><td></td></tr>
            <tr><td>颜色方案</td><td class="pb-0!"><button>&lt;无&gt;</button></td><td></td></tr>
            <tr><td>系统颜色方案</td><td class="pb-0!"><button>编辑...</button></td><td></td></tr>
            <tr><td>默认分析显示样式</td><td>无</td><td></td></tr>
            <tr><td><label for="sun">日光路径</label></td><td class="pb-0!"><input id="sun" type="checkbox" class="ml-0.5 block size-[13px] appearance-none border border-[#222] bg-white"></td><td></td></tr>
            <tr><th colspan="3"><span class="flex items-center justify-between pr-1.5">基线<svg class="h-[9px] w-[7px]"><use href="#dbl"/></svg></span></th></tr>
            <tr><td>范围: 底部标高</td><td>无</td><td></td></tr>
            <tr class="text-[#888]"><td>范围: 顶部标高</td><td>无边界</td><td></td></tr>
            <tr><td>基线方向</td><td>俯视</td><td></td></tr>
          </table>
          <div class="flex w-[17px] flex-col items-center justify-between bg-[#f5f3f7] py-1.5">
            <svg class="h-[7px] w-[9px] shrink-0 rotate-180"><use href="#arr"/></svg>
            <span class="mb-auto mt-1 h-[176px] w-[15px] bg-[#cccfcc]"></span>
            <svg class="h-[7px] w-[9px] shrink-0"><use href="#arr"/></svg>
          </div>
        </div>
        <div class="flex h-6 items-center justify-between pl-0.5 pr-0.5">
          <a href="#" class="text-[#1565b8] underline">属性帮助</a>
          <button disabled class="h-[19px] w-[73px] border border-[#b9bbb9] bg-[#cfd1cf] leading-4 text-[#8a8a8a]">应用</button>
        </div>
      </div>
    </section>

    <!-- Project browser -->
    <section class="mt-[5px] flex min-h-0 flex-1 flex-col">
      <h2 class="flex h-[18px] shrink-0 items-center justify-between bg-[#bdcfde] pl-1 pr-1.5 text-[13px]">项目浏览器 - 项目1<button aria-label="关闭项目浏览器" class="text-black"><svg class="size-2"><use href="#x"/></svg></button></h2>
      <div class="mr-0.5 mt-0.5 flex min-h-0 flex-1 overflow-hidden border-l-2 border-t-2 border-[#777] bg-white text-black">
        <ul role="tree" class="-ml-0.5 flex-1 [&>li]:flex [&>li]:h-5 [&>li]:items-center [&_svg]:h-5 [&_svg]:w-5 [&_svg.e]:w-7 [&_svg.k]:-ml-1.5 [&_svg.k]:mr-1 [&_svg.k]:size-4">
          <li><svg class="e"><use href="#t-root"/></svg><svg class="k"><use href="#t-view"/></svg><span class="-ml-px bg-[#e6e4e8] px-[3px] leading-5">视图 (鸿业-给排水)</span></li>
          <li><svg><use href="#t-v"/></svg><svg class="e"><use href="#t-minus"/></svg>01给排水</li>
          <li><svg><use href="#t-v"/></svg><svg><use href="#t-v"/></svg><svg class="e"><use href="#t-minusend"/></svg>01建模</li>
          <li><svg><use href="#t-v"/></svg><svg><use href="#t-v"/></svg><svg></svg><svg class="e"><use href="#t-leaf"/></svg>楼层平面: 建模-二层给排水平面图</li>
          <li><svg><use href="#t-v"/></svg><svg><use href="#t-v"/></svg><svg></svg><svg class="e"><use href="#t-end"/></svg><b>楼层平面: 建模-首层给排水平面图</b></li>
          <li><svg><use href="#t-v"/></svg><svg class="e"><use href="#t-minus"/></svg>02消防</li>
          <li><svg><use href="#t-v"/></svg><svg><use href="#t-v"/></svg><svg class="e"><use href="#t-minusend"/></svg>01建模</li>
          <li><svg><use href="#t-v"/></svg><svg><use href="#t-v"/></svg><svg></svg><svg class="e"><use href="#t-leaf"/></svg>楼层平面: 建模-二层消防平面图</li>
          <li><svg><use href="#t-v"/></svg><svg><use href="#t-v"/></svg><svg></svg><svg class="e"><use href="#t-end"/></svg>楼层平面: 建模-首层消防平面图</li>
          <li><svg><use href="#t-v"/></svg><svg class="e"><use href="#t-plus"/></svg>03立面</li>
          <li><svg><use href="#t-v"/></svg><svg class="e"><use href="#t-plus"/></svg>04三维</li>
          <li><svg class="e"><use href="#t-plus"/></svg><svg class="k"><use href="#t-leg"/></svg><span class="pl-0.5">图例</span></li>
          <li><svg class="e"><use href="#t-leaf"/></svg><svg class="k"><use href="#t-sch"/></svg><span class="pl-0.5">明细表/数量</span></li>
          <li><svg class="e"><use href="#t-plus"/></svg><svg class="k"><use href="#t-sheet"/></svg><span class="pl-0.5">图纸 (全部)</span></li>
        </ul>
        <div class="flex w-[15px] flex-col items-center justify-between bg-[#f5f3f7] py-1.5">
          <svg class="h-[7px] w-[9px] shrink-0 rotate-180"><use href="#arr"/></svg>
          <span class="mb-auto mt-1 h-[187px] w-[15px] bg-[#cccfcc]"></span>
          <svg class="h-[7px] w-[9px] shrink-0"><use href="#arr"/></svg>
        </div>
      </div>
    </section>
  </aside>

  <!-- Drawing area -->
  <section class="ml-1 mr-[3px] flex min-w-0 flex-1 flex-col border-l-2 border-t-2 border-[#777]">
    <div class="flex min-h-0 flex-1">
      <div class="relative flex-1 bg-white">
        <div class="absolute right-1 top-1.5 flex items-center gap-1.5">
          <button aria-label="最小化视图"><svg class="mt-0.5 h-3 w-3" viewBox="0 0 12 12"><path d="M.5 5.500h11v3H.5z" fill="#fff" stroke="#444"/></svg></button>
          <button aria-label="还原视图"><svg class="h-3 w-3" viewBox="0 0 12 12"><path d="M3.500 3V.5h8v8H9M.5 3.500H8.500v8H.5z" fill="#fff" stroke="#444" stroke-width="1.300"/><path d="M3.500 6h2v3h-2z" fill="none" stroke="#444"/></svg></button>
          <button aria-label="关闭视图"><svg class="h-3 w-3" viewBox="0 0 12 12"><path d="M.5 1h3.500l2 2.500L8 1h3.500L8 6l3.500 5H8L6 8.500 4 11H.5L4 6z" fill="#fff" stroke="#444"/></svg></button>
        </div>
        <div class="absolute right-px top-7 flex h-[118px] w-9 flex-col items-center rounded-md border-2 border-[#c3c3c3] bg-[#f6f6f6]">
          <svg class="mr-0.5 mt-0.5 size-2 self-end" viewBox="0 0 8 8"><circle cx="4" cy="4" r="4" fill="#b5b5b5"/><path d="M2.500 2.500l3 3M5.500 2.500l-3 3" stroke="#fff"/></svg>
          <svg class="mt-2.5 h-6 w-7 shrink-0" viewBox="0 0 28 24"><path d="M12 1h9v10q0 9-9 9a9.500 9.500 0 0 1 0-19z" fill="#eee" stroke="#aaa" stroke-width="1.400"/><circle cx="12" cy="10" r="4.500" fill="#fafafa" stroke="#aaa" stroke-width="1.300"/><text x="13" y="23" font-size="10" font-weight="700" fill="#7fa2cf">2D</text></svg>
          <svg class="mt-1.5 h-[3px] w-[5px] shrink-0 text-[#888]"><use href="#tri"/></svg>
          <span class="mt-1 h-px w-[26px] shrink-0 bg-[#ccc]"></span>
          <svg class="mt-2 size-4 shrink-0" viewBox="0 0 16 16"><path d="M1 1l8 8M9 1L1 9M0 3V0h3M7 0h3v3M0 7v3h3" fill="none" stroke="#aaa"/><circle cx="11" cy="10" r="3" fill="#eee" stroke="#999"/><path d="M13 12l3 4" stroke="#999" stroke-width="1.600"/></svg>
          <svg class="mt-2.5 h-[3px] w-[5px] shrink-0 text-[#888]"><use href="#tri"/></svg>
          <svg class="mb-0.5 mr-0.5 mt-auto size-2 self-end" viewBox="0 0 8 8"><circle cx="4" cy="4" r="4" fill="#b5b5b5"/><path d="M2 4h4" stroke="#fff"/></svg>
        </div>
        <!-- elevation markers -->
        <svg class="absolute left-[583px] top-[91px] h-[24px] w-4" viewBox="0 0 16 24"><path d="M1 10h14l-7 8z"/><circle cx="8" cy="8" r="7" fill="#fff" stroke="#000" stroke-width="1.300"/><path d="M6 8h3" stroke="#aaa"/><path d="M10 20h3M10 22h3" stroke="#999"/></svg>
        <svg class="absolute left-[244px] top-[390px] h-4 w-6" viewBox="0 0 24 16"><path d="M10 1v14l8-7z"/><circle cx="8" cy="8" r="7" fill="#fff" stroke="#000" stroke-width="1.300"/><path d="M8 6v3" stroke="#aaa"/><path d="M18 4h4M19 6h3" stroke="#999"/></svg>
        <svg class="absolute left-[904px] top-[390px] h-4 w-6" viewBox="0 0 24 16"><path d="M14 1v14L6 8z"/><circle cx="16" cy="8" r="7" fill="#fff" stroke="#000" stroke-width="1.300"/><path d="M16 6v3" stroke="#aaa"/><path d="M1 4h4M2 6h3" stroke="#999"/></svg>
        <svg class="absolute left-[583px] top-[705px] h-6 w-4" viewBox="0 0 16 24"><path d="M1 14h14L8 6z"/><circle cx="8" cy="16" r="7" fill="#fff" stroke="#000" stroke-width="1.300"/><path d="M6 16h3" stroke="#aaa"/><path d="M10 2h3M10 4h3" stroke="#999"/></svg>
      </div>
      <div class="flex w-[15px] flex-col items-center bg-[#f5f3f7] pb-1 pt-0.5">
        <svg class="mt-0.5 h-[7px] w-[9px] shrink-0 rotate-180"><use href="#arr"/></svg>
        <span class="mb-auto mt-auto h-[17px] w-[15px] bg-[#cccfcc]"></span>
        <svg class="h-[7px] w-[9px] shrink-0"><use href="#arr"/></svg>
      </div>
    </div>
    <div class="flex h-[18px] shrink-0 items-center bg-[#f5f3f7] pl-5 text-black">
      <span class="w-[59px] whitespace-pre leading-[14px]">1  :  100</span>
      <div class="flex items-center gap-[5px] [&_svg]:h-[14px] [&_svg]:w-4">
        <svg viewBox="0 0 16 14"><path d="M.5 1.500h15v11H.5z" fill="#eee" stroke="#333"/><path d="M1 2h5v3H1zM10 2h5v3h-5zM5 5h6v4H5zM1 9h5v3H1zM10 9h5v3h-5z" fill="#667"/></svg>
        <svg viewBox="0 0 16 14"><path d="M1 5l4-4h10v7l-4 5H1zM1 5h10v8M11 5l4-4" fill="#fff" stroke="#333"/></svg>
        <svg viewBox="0 0 16 14"><circle cx="6" cy="6" r="3.500" fill="#ffe27a" stroke="#d59a10"/><path d="M6 0v2M1 2l2 1M0 7h2M11 2L9 3M3 10l-1 2" stroke="#d59a10"/><path d="M8 6l6 7M14 6l-6 7" stroke="#c01818" stroke-width="2"/></svg>
        <svg viewBox="0 0 16 14"><circle cx="6" cy="5" r="4" fill="#d5e9fa" stroke="#3b7ab8"/><path d="M2 12h5" stroke="#3b7ab8" stroke-width="2"/><path d="M9 6l6 7M15 6l-6 7" stroke="#c01818" stroke-width="2"/></svg>
        <svg viewBox="0 0 16 14"><path d="M0 9h3V3h12M5 13V5h9M9 3v8" fill="none" stroke="#2f6fae" stroke-width="1.400"/><path d="M9 6l6 7M15 6l-6 7" stroke="#c01818" stroke-width="2"/></svg>
        <svg viewBox="0 0 16 14"><path d="M0 9h3V3h7M5 13V6h4M9 6v5" fill="none" stroke="#2f6fae" stroke-width="1.400"/><circle cx="13" cy="5" r="2.500" fill="#cfe6fa" stroke="#2f6fae"/><path d="M13 8v4" stroke="#2f6fae" stroke-width="2"/></svg>
        <svg viewBox="0 0 16 14"><path d="M0 3l4-1M4 7l5 1M15 6q1-4-3-3" fill="none" stroke="#333"/><circle cx="4" cy="6" r="2.500" fill="#fff" stroke="#333"/><circle cx="11" cy="9" r="3" fill="#fff" stroke="#333"/></svg>
        <svg viewBox="0 0 16 14"><circle cx="7" cy="5" r="2.700" fill="#d5e9fa" stroke="#2f6fae"/><path d="M7 8v4" stroke="#2f6fae" stroke-width="2"/></svg>
        <svg viewBox="0 0 16 14"><path d="M2 2h11v9H2zM2 5h11M5 0v3M10 0v3" fill="#fff" stroke="#222" stroke-dasharray="2 1"/><path d="M8.500 6.500h6v6h-6z" fill="#fff" stroke="#222"/><circle cx="11.500" cy="9.500" r="1.500"/></svg>
        <svg viewBox="0 0 16 14"><path d="M1 3l4-2h7l3 3M1 3v8M5 1v11M9 1v11M1 6h10M1 10h9" fill="none" stroke="#444"/><path d="M5 7v6" stroke="#c01818" stroke-width="1.500"/><circle cx="12.500" cy="6" r="2.500" fill="#cfe6fa" stroke="#2f6fae"/><path d="M12.500 9v4" stroke="#2f6fae" stroke-width="2"/></svg>
        <svg viewBox="0 0 16 14"><path d="M1 2h14M1 0v4M15 0v4M2 6v6h6" fill="none" stroke="#444" stroke-dasharray="2 1"/><path d="M9 8h6v5H9z" fill="#777" stroke="#333"/><path d="M10 8V6h4v2" fill="none" stroke="#333"/></svg>
      </div>
      <svg class="ml-[7px] h-[7px] w-[9px] rotate-90"><use href="#arr"/></svg>
      <span class="ml-auto mr-[572px] h-[17px] w-[17px] bg-[#cccfcc]"></span>
      <svg class="mr-2 h-[7px] w-[9px] -rotate-90"><use href="#arr"/></svg>
      <svg class="mr-1 mt-1 size-2" viewBox="0 0 8 8"><path d="M6 0h2v2H6zM3 3h2v2H3zM6 3h2v2H6zM0 6h2v2H0zM3 6h2v2H3zM6 6h2v2H6z" fill="#bbb"/></svg>
    </div>
  </section>
</div>

<!-- Status bar -->
<div class="flex h-[25px] shrink-0 items-center border-t-2 border-[#a3a5a3] bg-[#d5d8d4] pl-0.5 text-black">
  <p class="w-[948px] shrink-0 whitespace-nowrap">单击可进行选择; 按 Tab 键并单击可选择其他项目; 按 Ctrl 键并单击可将新项目添加到选择集; 按 Shift 键并单击可取消选择。</p>
  <svg class="size-4" viewBox="0 0 16 16"><path d="M5 1h6v4H5zM1 6h5v9H1zM10 6h5v9h-5zM6 6h4v5H6z" fill="#9a9d9a" stroke="#fff" stroke-width=".6"/></svg>
  <div class="ml-2 flex h-5 w-[204px] items-center justify-end bg-white pr-0.5 text-[#aaa]"><svg class="h-1.5 w-2.5"><use href="#chev"/></svg></div>
  <svg class="ml-2 size-4" viewBox="0 0 16 16"><path d="M4 1h10v5H8L5 9V6H4z" fill="#ddd" stroke="#fff"/><path d="M1 15q1-6 6-6l2 6z" fill="#999"/><path d="M4 1h10v5" fill="none" stroke="#a5a8a5"/></svg>
  <span class="ml-1.5 w-8">:0</span>
  <svg class="size-4" viewBox="0 0 16 16"><path d="M.5 1h15v14H.5z" fill="#fff" stroke="#222" stroke-width="1.500"/><path d="M1 3h14M3 6h3M7 8h6M5 10h1M8 10h5M5 12h1M8 12h5" stroke="#222" stroke-width="1.200"/></svg>
  <svg class="ml-2.5 size-4" viewBox="0 0 16 16"><path d="M2 0h14v16h-6l3-5-4-4v2H2z" fill="#9b9e9b"/><path d="M0 10h7V7l5 4.500L7 16v-3H0z" fill="#aaa" stroke="#fff"/></svg>
  <select aria-label="设计选项" disabled class="ml-2 h-5 w-[204px] appearance-none bg-white pl-[3px] text-[#888]"><option>主模型</option></select>
  <svg class="-ml-3 h-1.5 w-2.5 text-[#aaa]"><use href="#chev"/></svg>
  <div class="ml-auto mr-[65px] flex items-center gap-2.5 [&>svg]:size-4">
    <svg viewBox="0 0 16 16"><path d="M2 2h5v4H2zM9 2h5v4H9zM6 4h4" fill="#ffe08a" stroke="#b98a10" stroke-width="1.500"/><path d="M6 4v10l3-2 1 3 2-1-1-3h3z" fill="#fff" stroke="#333"/></svg>
    <svg viewBox="0 0 16 16"><path d="M0 10h8M9 2L0 7M0 13h9V2" fill="none" stroke="#2f6fae" stroke-width="1.300"/><path d="M9 1l6 6M15 1L9 7" stroke="#c01818" stroke-width="2"/><path d="M8 5v9l3-2 1 3 1-1-1-3h3z" fill="#fff" stroke="#333"/></svg>
    <svg viewBox="0 0 16 16"><path d="M2 1h8v2H9v4h2v3H1V7h2V3H2z" fill="#f2a070" stroke="#b8501a"/><path d="M6 10v5" stroke="#b8501a"/><path d="M9 5v9l2-2 1 3 2-1-1-3h3z" fill="#fff" stroke="#333"/></svg>
    <svg viewBox="0 0 16 16"><path d="M1 4l6-2v11l-6 2z" fill="#a9d5f3" stroke="#2f6fae"/><path d="M9 1l6 6M15 1L9 7" stroke="#c01818" stroke-width="2"/><path d="M8 5v9l3-2 1 3 1-1-1-3h3z" fill="#fff" stroke="#333"/></svg>
    <svg viewBox="0 0 16 16"><path d="M5 0v10M0 5h10M3.500 2L5 .5 6.500 2M3.500 8L5 9.500 6.500 8M2 3.500L.5 5 2 6.500" fill="none" stroke="#222"/><path d="M9 5v9l2-2 1 3 2-1-1-3h3z" fill="#fff" stroke="#333"/></svg>
    <svg viewBox="0 0 16 16"><circle cx="8" cy="8" r="5.500" fill="none" stroke="#a0a3a0" stroke-width="3" stroke-dasharray="3 1.300"/></svg>
    <span class="flex items-center"><svg class="size-4" viewBox="0 0 16 16"><path d="M0 1h16v2l-6 6v5l-4 2V9L0 3z" fill="url(#gh)" stroke="#444"/></svg>:0</span>
  </div>
</div>

<!-- Taskbar -->
<footer class="flex h-[30px] shrink-0 items-center bg-[#080a06] text-[13px] text-white">
  <div class="flex items-center gap-5 pl-2.5 pr-[14px] [&_svg]:size-4">
    <button aria-label="开始"><svg viewBox="0 0 16 16"><path d="M0 2l7-1v6.500H0zM8 1l8-1v7.500H8zM0 8.500h7V15l-7-1zM8 8.500h8V16l-8-1z" fill="#fff"/></svg></button>
    <button aria-label="Cortana"><svg viewBox="0 0 16 16"><circle cx="8" cy="8" r="6.500" fill="none" stroke="#fff" stroke-width="2"/></svg></button>
    <button aria-label="任务视图"><svg viewBox="0 0 16 16"><path d="M.5 0v2.500h10V0M.5 5.500h10v6H.5zM.5 16v-2h10v2M13.500 0v16" fill="none" stroke="#fff" stroke-width="1.200"/><path d="M12 4h3v3h-3z" fill="#fff"/></svg></button>
    <button aria-label="Android" class="ml-[3px]"><svg viewBox="0 0 16 16"><path d="M3 1l3 4M13 1l-3 4" stroke="#8dbb2a" stroke-width="1.200"/><path d="M0 13q0-9 8-9t8 9v2H0z" fill="#8dbb2a"/><circle cx="5" cy="9" r="1.200" fill="#fff"/><circle cx="11" cy="9" r="1.200" fill="#fff"/></svg></button>
  </div>
  <button class="flex h-full w-[153px] items-center gap-[5px] border-b-2 border-[#76b9ed] pl-[5px]"><svg class="size-4" viewBox="0 0 16 16"><path d="M8 8l3 7" stroke="#4a8a20" stroke-width="1.500"/><g fill="#6fc23a" stroke="#3a7a18" stroke-width=".6"><circle cx="5" cy="4" r="3.500"/><circle cx="11" cy="4" r="3.500"/><circle cx="4" cy="9" r="3.500"/><circle cx="11.500" cy="9" r="3.500"/></g></svg>BIM志 - Clover</button>
  <svg class="ml-[15px] size-4" viewBox="0 0 16 16"><path d="M0 0h16v16H0z" fill="#000"/><path d="M0 8h4M12 8h4" stroke="#b05a30" stroke-width="1.500"/><circle cx="8" cy="8" r="3.500" fill="#222" stroke="#d08050" stroke-width="1.600"/><circle cx="8" cy="8" r="1.200" fill="#e8c0a0"/></svg>
  <button class="ml-[15px] flex h-full w-[153px] items-center gap-1 whitespace-nowrap border-b-2 border-[#76b9ed] pl-1 text-xs"><svg class="size-4 shrink-0" viewBox="0 0 16 16"><path d="M8 8V0a8 8 0 0 1 7 4z" fill="#f5b52a"/><path d="M8 8l7-4a8 8 0 0 1 0 8z" fill="#f2662b"/><path d="M8 8l7 4a8 8 0 0 1-7 4z" fill="#e0307a"/><path d="M8 8v8a8 8 0 0 1-7-4z" fill="#8a45c8"/><path d="M8 8l-7 4a8 8 0 0 1 0-8z" fill="#2b8de0"/><path d="M8 8L1 4a8 8 0 0 1 7-4z" fill="#5cc83c"/><circle cx="8" cy="8" r="3" fill="#fff"/></svg>360导航_一个主页，...</button>
  <div class="flex flex-1 items-center gap-[21px] pl-[13px] [&>svg]:size-4">
    <svg viewBox="0 0 16 16"><path d="M1 0h14v13h-4l-3 3-3-3H1z" fill="#0c84f2"/><path d="M8 2l1.500 3H13l-2.500 2.500 1 3.500L8 9l-3.500 2 1-3.500L3 5h3.500z" fill="#fff"/></svg>
    <svg viewBox="0 0 16 16"><rect width="16" height="16" rx="3" fill="#fff"/><circle cx="8" cy="6" r="3" fill="none" stroke="#e0607a" stroke-width="1.200"/><circle cx="5" cy="10" r="2.600" fill="none" stroke="#2a8af0" stroke-width="1.300"/><circle cx="11" cy="10" r="2.600" fill="none" stroke="#2ab0f0" stroke-width="1.300"/></svg>
    <svg viewBox="0 0 16 16"><path d="M6 1q6 0 6 5t-6 5l-4 1 .5-2.500Q0 8 0 6q0-5 6-5z" fill="#6fcf3a"/><circle cx="4" cy="5" r="1"/><circle cx="8" cy="5" r="1"/><path d="M11 6q5 .5 5 4.500 0 1.500-1 2.500v2l-2-1q-6 1-7-3.500Q6.500 6 11 6z" fill="#fff"/><circle cx="9.500" cy="10" r=".8"/><circle cx="12.500" cy="10" r=".8"/></svg>
    <svg viewBox="0 0 16 16"><circle cx="9.500" cy="6" r="4.500" fill="none" stroke="#ff7a14" stroke-width="3"/><path d="M6 10l-5 5" stroke="#ff7a14" stroke-width="3"/></svg>
    <svg viewBox="0 0 16 16"><path d="M0 0h16v16H0z" fill="#f6e8d8"/><path d="M0 11h16v5H0zM5 2l6-1-2 6z" fill="#e8762a"/><path d="M10 1L3 12M2 5h11l-5 8" stroke="#5a2a10" stroke-width="1.200" fill="none"/><path d="M2 13h3m1 0h4m1 0h3" stroke="#fff" stroke-width="1.500"/></svg>
    <svg viewBox="0 0 16 16"><path d="M0 0h16v16H0z" fill="#1769b8"/><path d="M1 2h14M1 14h14" stroke="#5aa5e8"/><path d="M5 5H2v6h3M6 8h4M8 5v6M11 5v6h2q2-3 0-6z" fill="none" stroke="#cfe6fa"/></svg>
    <svg viewBox="0 0 16 16"><path d="M1 3h6v8H1zM1 7h6M4 3v10M9 5v5M12 5h3M11 8h3v3M8 12l3-6" fill="none" stroke="#ddd" stroke-width="1.400"/></svg>
    <button class="-ml-2.5 flex h-[30px] w-[160px] items-center gap-[5px] border-b-2 border-[#76b9ed] bg-[#3a3b39] pl-2"><span class="grid size-4 place-items-center bg-[#d5dfe9]"><svg class="h-3.5 w-3"><use href="#R"/></svg></span>Autodesk Revit 201...</button>
  </div>
  <div class="flex items-center gap-[9px] [&>svg]:size-4">
    <svg viewBox="0 0 16 16"><path d="M1 2h14v12H1z" fill="#1fe01f"/><path d="M0 6h2v4H0zM14 6h2v4h-2z" fill="#777"/><circle cx="8" cy="8" r="4" fill="#d81e2e"/><path d="M2 8h12" stroke="#50306a" stroke-width="1.500"/></svg>
    <svg viewBox="0 0 16 16"><path d="M4 0h6v4H4zM2.500 4.500h9v9q0 2-2 2h-5q-2 0-2-2z" fill="#080a06" stroke="#fff"/><path d="M8 13l2 2 5-5" fill="none" stroke="#ccc" stroke-width="1.400"/></svg>
    <svg viewBox="0 0 16 16"><path d="M1 2l7-2 7 2v7q-1 5-7 7-6-2-7-7z" fill="#f29a1c"/><path d="M9 3q-6 5-3 10 5-1 3-10z" fill="#fff"/></svg>
    <svg viewBox="0 0 16 16"><rect width="16" height="16" rx="2" fill="#f28a1c"/><path d="M2.500 3.500h11v9h-11zM2.500 6h11" fill="none" stroke="#fff"/></svg>
    <svg viewBox="0 0 16 16"><path d="M3 0q-2 10 12 15Q15 5 3 0z" fill="#333" stroke="#aaa"/><circle cx="6" cy="11" r="3.500" fill="#bbb"/><circle cx="11" cy="7" r="1.500" fill="#eee"/></svg>
    <svg viewBox="0 0 16 16"><path d="M3 15Q3 4 14 4M6 15q0-8 8-8M9 15q0-5 5-5" fill="none" stroke="#ddd" stroke-width="1.300"/><circle cx="12.500" cy="13.500" r="1.500" fill="#fff"/></svg>
    <svg class="-mx-0.5" viewBox="0 0 16 16"><path d="M0 5h3l4-4v14l-4-4H0z" fill="none" stroke="#fff"/><path d="M9 5q2 3 0 6M11 3q4 5 0 10M13.500 1q5 7 0 14" fill="none" stroke="#ddd"/></svg>
    <span>英</span>
    <time class="w-[41px]">20:27</time>
    <svg viewBox="0 0 16 16"><path d="M.5 1.500h15v11H11l-3 3-1-3H.5z" fill="none" stroke="#fff" stroke-width="1.200"/></svg>
    <span class="ml-2.5 mr-[5px] h-[30px] w-px bg-[#777]"></span>
  </div>
</footer>

<!-- Quick access menu -->
<div role="menu" class="absolute left-[751px] top-[21px] w-[154px] border border-[#999] bg-white px-px pb-px text-black shadow-[3px_3px_2px_rgba(0,0,0,.5)] [&>button]:flex [&>button]:h-[25px] [&>button]:w-full [&>button]:items-center [&>button]:whitespace-nowrap [&>button]:pl-2.5 [&>button>svg]:mr-1.5 [&>button>svg]:h-[9px] [&>button>svg]:w-[11px]">
  <h3 class="-mx-px mb-px flex h-5 items-end border-b border-[#ddd] bg-[#eeeeef] pl-[5px] leading-[18px]">自定义快速访问工具栏</h3>
  <button role="menuitem"><svg></svg>新建</button>
  <button role="menuitem"><svg><use href="#ck"/></svg>打开</button>
  <button role="menuitem"><svg><use href="#ck"/></svg>保存</button>
  <button role="menuitem"><svg><use href="#ck"/></svg>与中心文件同步</button>
  <button role="menuitem"><svg><use href="#ck"/></svg>放弃</button>
  <button role="menuitem"><svg><use href="#ck"/></svg>重做</button>
  <button role="menuitem"><svg><use href="#ck"/></svg>打印</button>
  <button role="menuitem"><svg><use href="#ck"/></svg>测量</button>
  <button role="menuitem"><svg><use href="#ck"/></svg>对齐尺寸标注</button>
  <button role="menuitem"><svg><use href="#ck"/></svg>按类别标记</button>
  <button role="menuitem"><svg><use href="#ck"/></svg>文字</button>
  <button role="menuitem"><svg><use href="#ck"/></svg>默认三维视图</button>
  <button role="menuitem"><svg><use href="#ck"/></svg>剖面</button>
  <button role="menuitem"><svg><use href="#ck"/></svg>细线</button>
  <button role="menuitem"><svg><use href="#ck"/></svg>关闭隐藏窗口</button>
  <button role="menuitem"><svg><use href="#ck"/></svg>切换窗口</button>
  <hr class="mb-0.5 mt-0.5 border-[#999]">
  <button role="menuitem"><svg></svg>自定义快速访问工具栏</button>
  <button role="menuitem" class="h-6! border border-[#1f5f9f] bg-[#c9e6fb] pl-[9px]!"><svg></svg>在功能区下方显示</button>
</div>
<div role="tooltip" class="absolute left-[854px] top-[497px] w-[132px] border border-[#888] bg-[#efefef] text-xs font-medium text-[#555]">
  <p class="border-b border-[#aaa] pl-1.5 leading-[31px]">在功能区下方显示</p>
  <p class="whitespace-nowrap pl-1.5 leading-[29px]">按 <b>F1</b> 键获得更多帮助</p>
</div>
<svg class="absolute left-[838px] top-[464px] h-12 w-9" viewBox="0 0 36 48"><circle cx="16" cy="16" r="15" fill="#f0606e" fill-opacity=".5"/><path d="M16 16v27l6-6 5 10 4-2-5-10h8z" fill="#000" stroke="#fff"/></svg>
</body>
</html>
